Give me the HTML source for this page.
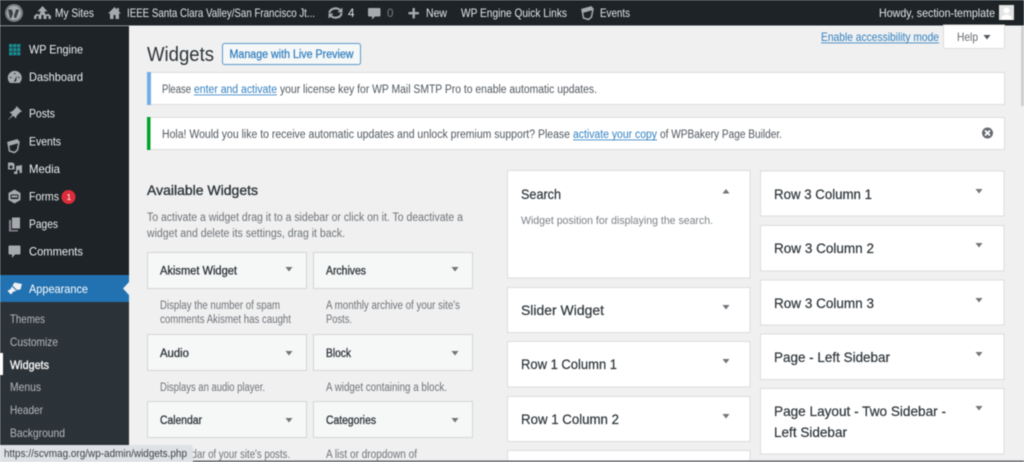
<!DOCTYPE html>
<html lang="en"><head><meta charset="utf-8"><title>Widgets</title>
<style>
html,body{margin:0;padding:0;width:1024px;height:462px;overflow:hidden;background:#f0f0f0}
svg{display:block;filter:blur(.4px)}
text{font-family:"Liberation Sans",sans-serif;font-size:12px;white-space:pre}
.b text{fill:#e6e8ea}
.s text{fill:#f0f0f1}
.u text{fill:#b4b9be}
.d text{fill:#6d7277;font-size:11.5px}
.w text{fill:#2c3338;font-size:11.5px;stroke:#2c3338;stroke-width:.3}
.t text{fill:#2c3338;font-size:14px;stroke:#2c3338;stroke-width:.2}
.n text{fill:#50575e;font-size:11.5px}
.lnk{fill:#2f7fc0}
.ic{fill:#a7aaad}
.av{fill:#f6f7f7;stroke:#d4d5d7}
.sb{fill:#fff;stroke:#dcdcde}
.ar{fill:#70757a}
</style></head><body>
<svg width="1024" height="462" viewBox="0 0 1024 462" xmlns="http://www.w3.org/2000/svg">
<rect width="1024" height="462" fill="#f0f0f0"/>
<rect x="1021" y="26" width="3" height="80" fill="#d0d0d0"/>
<!-- sidebar -->
<rect x="0" y="26" width="129" height="436" fill="#1d2327"/>
<rect x="0" y="275" width="129" height="27" fill="#2271b1"/>
<rect x="0" y="302" width="129" height="160" fill="#2c3338"/>
<path d="M129 282l-6 6.500 6 6.500z" fill="#f0f0f0"/>
<rect x="0" y="353" width="3" height="22" fill="#fff"/>
<!-- admin bar -->
<rect width="1024" height="25.500" fill="#1d2327"/>
<g class="b">
<text x="55" y="17" textLength="39" lengthAdjust="spacingAndGlyphs">My Sites</text>
<text x="127" y="17" textLength="188" lengthAdjust="spacingAndGlyphs">IEEE Santa Clara Valley/San Francisco Jt...</text>
<text x="348" y="17" textLength="6.500" lengthAdjust="spacingAndGlyphs">4</text>
<text x="387" y="17" textLength="6.500" lengthAdjust="spacingAndGlyphs" style="fill:#777c80">0</text>
<text x="426" y="17" textLength="21" lengthAdjust="spacingAndGlyphs">New</text>
<text x="461" y="17" textLength="106" lengthAdjust="spacingAndGlyphs">WP Engine Quick Links</text>
<text x="600" y="17" textLength="30" lengthAdjust="spacingAndGlyphs">Events</text>
<text x="879" y="17" textLength="116" lengthAdjust="spacingAndGlyphs">Howdy, section-template</text>
</g>
<!-- admin bar icons -->
<circle cx="14" cy="13" r="8.800" fill="#a7aaad"/>
<circle cx="14" cy="13" r="7.700" fill="none" stroke="#4a4f53" stroke-width=".7"/>
<path d="M8 9.500h3.800l2.200 6.500 2-6.500h-1.200h4.400l-3 8.500h-1.600l-1.600-4.600-1.600 4.600h-1.600z" fill="#3a3f43"/>
<path class="ic" d="M34 19v-3l3-2.500 2 1.500 3-6 .5-2 .5 2 3 6 2-1.500 3 2.500v3z"/>
<path class="ic" d="M42.500 6l-5 5.500h10z"/>
<rect x="36.500" y="16" width="2" height="3" fill="#1d2327"/><rect x="41.500" y="15" width="2" height="4" fill="#1d2327"/><rect x="46.500" y="16" width="2" height="3" fill="#1d2327"/>
<path class="ic" d="M114.500 7l-6.500 6.500h2v5.500h3.500v-4h2v4h3.500v-5.500h2l-2-2v-3.500h-2v1.500z"/>
<path fill="none" stroke="#a7aaad" stroke-width="2.200" d="M329.500 13a6 4.800 0 0 1 11-2.500M341.500 13a6 4.800 0 0 1-11 2.500"/>
<path class="ic" d="M342.500 7.500v5h-5zM328.500 18.500v-5h5z"/>
<path class="ic" d="M369 8h10.500a1 1 0 0 1 1 1v6.500a1 1 0 0 1-1 1H375l-3 3v-3h-3a1 1 0 0 1-1-1V9a1 1 0 0 1 1-1z"/>
<path class="ic" d="M412.500 8h2.400v4h4v2.400h-4v4h-2.400v-4h-4v-2.400h4z"/>
<path fill="none" stroke="#a7aaad" stroke-width="1.500" d="M582 9.500l9-2.500 2 2-1.500 8-3 2.500-5-1.500z"/><path class="ic" d="M582 9.500l10-3 1 3.500-10.500 3z"/>
<rect x="999" y="5" width="15" height="15" fill="#e4e4e4"/>
<circle cx="1006.500" cy="10.500" r="3" fill="#fff"/><path d="M1001 20c0-4 3-5.500 5.500-5.500s5.500 1.500 5.500 5.500z" fill="#fff"/>
<!-- sidebar text -->
<g class="s">
<text x="29" y="53.500" textLength="54" lengthAdjust="spacingAndGlyphs">WP Engine</text>
<text x="29" y="81" textLength="54" lengthAdjust="spacingAndGlyphs">Dashboard</text>
<text x="29" y="117.500" textLength="26" lengthAdjust="spacingAndGlyphs">Posts</text>
<text x="29" y="145.500" textLength="32" lengthAdjust="spacingAndGlyphs">Events</text>
<text x="29" y="173" textLength="31" lengthAdjust="spacingAndGlyphs">Media</text>
<text x="29" y="200.500" textLength="30" lengthAdjust="spacingAndGlyphs">Forms</text>
<text x="29" y="228" textLength="29" lengthAdjust="spacingAndGlyphs">Pages</text>
<text x="29" y="255.500" textLength="54" lengthAdjust="spacingAndGlyphs">Comments</text>
<text x="29" y="293" textLength="59" lengthAdjust="spacingAndGlyphs" style="fill:#fff">Appearance</text>
</g>
<circle cx="68.500" cy="197" r="7" fill="#dd2c3a"/>
<text x="66.500" y="200" style="font-size:8.500px;fill:#fff">1</text>
<g class="u">
<text x="10" y="323" textLength="35" lengthAdjust="spacingAndGlyphs">Themes</text>
<text x="10" y="346" textLength="48" lengthAdjust="spacingAndGlyphs">Customize</text>
<text x="10" y="369" textLength="39" lengthAdjust="spacingAndGlyphs" style="fill:#fff;stroke:#fff;stroke-width:.3">Widgets</text>
<text x="10" y="391" textLength="31" lengthAdjust="spacingAndGlyphs">Menus</text>
<text x="10" y="414" textLength="33" lengthAdjust="spacingAndGlyphs">Header</text>
<text x="10" y="437" textLength="55" lengthAdjust="spacingAndGlyphs">Background</text>
</g>
<!-- sidebar icons -->
<g fill="#1b8a8f">
<rect x="9" y="44" width="3.400" height="3.400"/><rect x="13" y="44" width="3.400" height="3.400"/><rect x="17" y="44" width="3.400" height="3.400"/>
<rect x="9" y="48" width="3.400" height="3.400"/><rect x="13" y="48" width="3.400" height="3.400"/><rect x="17" y="48" width="3.400" height="3.400"/>
<rect x="9" y="52" width="3.400" height="3.400"/><rect x="13" y="52" width="3.400" height="3.400"/><rect x="17" y="52" width="3.400" height="3.400"/>
</g>
<path class="ic" d="M10 83a7 7 0 1 1 9.500 0z"/>
<path d="M14 81.500l2.800-6-.8 6zM10 77h1.500v1H10zM18 77h1.500v1H18zM14 73h1.500v1H14z" fill="#1d2327"/>
<path class="ic" d="M16.500 106l5.500 5.500-2 .8-3.500 3.700-.5 2.500-2.800-2.800-5.700 4.800 4.800-5.700-2.800-2.800 2.500-.5 3.700-3.500z"/>
<g transform="translate(-574 133)"><path fill="none" stroke="#a7aaad" stroke-width="1.500" d="M582 9.500l9-2.500 2 2-1.500 8-3 2.500-5-1.500z"/><path class="ic" d="M582 9.500l10-3 1 3.500-10.500 3z"/></g>
<path class="ic" d="M8 162.500h5l1.500 1.500v5.500h-6.500zM16 166l6-1v8h-2.500v-3h-2v4h-3.500v-2.500h2z"/>
<circle cx="11" cy="167" r="1.500" fill="#1d2327"/>
<path class="ic" d="M14.500 189.500l6 3.500v7l-6 3.500-6-3.500v-7z"/>
<rect x="10.500" y="194.500" width="8" height="4.500" rx="1" fill="#1d2327"/><rect x="11.500" y="195.500" width="6" height="2" fill="#a7aaad"/>
<path class="ic" d="M12 217.500h8v11h-8z"/><path d="M9 220h2v10h7v1.500H9z" fill="#8b8794"/>
<path class="ic" d="M9.500 245.500h10a1 1 0 0 1 1 1v7a1 1 0 0 1-1 1h-4.500l-3 3.500v-3.500h-2.500a1 1 0 0 1-1-1v-7a1 1 0 0 1 1-1z"/>
<path d="M14.500 282.500l7.500 1.500-1.500 5.500-3.500.5-4.500-4.500z" fill="#f0f0f1"/>
<path d="M12 286.500l4.500 4.500-3 .5-2.500 3-3.500-3.500 3-2z" fill="#f0f0f1"/>
<!-- heading -->
<text x="147" y="61" textLength="67" lengthAdjust="spacingAndGlyphs" style="font-size:20px;fill:#2c3338">Widgets</text>
<rect x="222.500" y="43.500" width="138" height="21" rx="2" fill="#f6f7f7" stroke="#5a9bcf"/>
<text x="229.500" y="58" textLength="124" lengthAdjust="spacingAndGlyphs" class="lnk" style="font-size:11.500px;stroke:#2f7fc0;stroke-width:.25">Manage with Live Preview</text>
<text x="821" y="41" textLength="118" lengthAdjust="spacingAndGlyphs" class="lnk">Enable accessibility mode</text>
<rect x="821" y="42.500" width="118" height=".8" fill="#2f7fc0"/>
<path d="M943.500 25v21.500a2 2 0 0 0 2 2h57a2 2 0 0 0 2-2V25z" fill="#fff" stroke="#dcdcde"/>
<text x="957" y="41" textLength="21" lengthAdjust="spacingAndGlyphs" style="fill:#646970">Help</text>
<path d="M983.500 35h7l-3.500 4.500z" fill="#50575e"/>
<!-- notices -->
<rect x="147.500" y="72.500" width="857" height="32" fill="#fff" stroke="#dcdcde"/>
<rect x="147" y="72" width="4" height="33" fill="#72aee6"/>
<rect x="147.500" y="117.500" width="857" height="32" fill="#fff" stroke="#dcdcde"/>
<rect x="147" y="117" width="3.500" height="33" fill="#00a32a"/>
<g class="n">
<text x="162" y="93" textLength="29" lengthAdjust="spacingAndGlyphs">Please</text>
<text x="194" y="93" textLength="83" lengthAdjust="spacingAndGlyphs" style="fill:#2f7fc0">enter and activate</text>
<text x="280" y="93" textLength="317" lengthAdjust="spacingAndGlyphs">your license key for WP Mail SMTP Pro to enable automatic updates.</text>
<text x="162" y="138" textLength="408" lengthAdjust="spacingAndGlyphs">Hola! Would you like to receive automatic updates and unlock premium support? Please</text>
<text x="573" y="138" textLength="84" lengthAdjust="spacingAndGlyphs" style="fill:#2f7fc0">activate your copy</text>
<text x="660" y="138" textLength="122" lengthAdjust="spacingAndGlyphs">of WPBakery Page Builder.</text>
</g>
<rect x="194" y="94.500" width="83" height=".8" fill="#2f7fc0"/>
<rect x="573" y="139.500" width="84" height=".8" fill="#2f7fc0"/>
<circle cx="987.500" cy="133" r="5.500" fill="#646970"/>
<path d="M985 130.500l5 5m0-5l-5 5" stroke="#fff" stroke-width="1.800"/>
<!-- available widgets -->
<text x="147" y="195" textLength="111" lengthAdjust="spacingAndGlyphs" style="font-size:14px;fill:#2c3338;stroke:#2c3338;stroke-width:.35">Available Widgets</text>
<g class="d">
<text x="147" y="221" textLength="316" lengthAdjust="spacingAndGlyphs">To activate a widget drag it to a sidebar or click on it. To deactivate a</text>
<text x="147" y="237" textLength="198" lengthAdjust="spacingAndGlyphs">widget and delete its settings, drag it back.</text>
<text x="160" y="309" textLength="120" lengthAdjust="spacingAndGlyphs">Display the number of spam</text>
<text x="160" y="323" textLength="131" lengthAdjust="spacingAndGlyphs">comments Akismet has caught</text>
<text x="326" y="309" textLength="134" lengthAdjust="spacingAndGlyphs">A monthly archive of your site's</text>
<text x="326" y="323" textLength="26" lengthAdjust="spacingAndGlyphs">Posts.</text>
<text x="160" y="391" textLength="105" lengthAdjust="spacingAndGlyphs">Displays an audio player.</text>
<text x="326" y="391" textLength="121" lengthAdjust="spacingAndGlyphs">A widget containing a block.</text>
<text x="160" y="458" textLength="130" lengthAdjust="spacingAndGlyphs">A calendar of your site's posts.</text>
<text x="326" y="458" textLength="91" lengthAdjust="spacingAndGlyphs">A list or dropdown of</text>
</g>
<rect class="av" x="147.500" y="252.500" width="159" height="36"/>
<rect class="av" x="313.500" y="252.500" width="159" height="36"/>
<rect class="av" x="147.500" y="334.500" width="159" height="36"/>
<rect class="av" x="313.500" y="334.500" width="159" height="36"/>
<rect class="av" x="147.500" y="401.500" width="159" height="36"/>
<rect class="av" x="313.500" y="401.500" width="159" height="36"/>
<g class="w">
<text x="160" y="274.500" textLength="77" lengthAdjust="spacingAndGlyphs">Akismet Widget</text>
<text x="326" y="274.500" textLength="40" lengthAdjust="spacingAndGlyphs">Archives</text>
<text x="160" y="357" textLength="29" lengthAdjust="spacingAndGlyphs">Audio</text>
<text x="326" y="357" textLength="25" lengthAdjust="spacingAndGlyphs">Block</text>
<text x="160" y="424" textLength="42" lengthAdjust="spacingAndGlyphs">Calendar</text>
<text x="326" y="424" textLength="50" lengthAdjust="spacingAndGlyphs">Categories</text>
</g>
<g class="ar">
<path d="M285.500 267h7l-3.500 4.500z"/><path d="M451.500 267h7l-3.500 4.500z"/>
<path d="M285.500 351h7l-3.500 4.500z"/><path d="M451.500 351h7l-3.500 4.500z"/>
<path d="M285.500 418h7l-3.500 4.500z"/><path d="M451.500 418h7l-3.500 4.500z"/>
</g>
<!-- sidebars -->
<rect class="sb" x="507.500" y="170.500" width="242.500" height="107.500"/>
<rect class="sb" x="507.500" y="287.500" width="242.500" height="45"/>
<rect class="sb" x="507.500" y="341.500" width="242.500" height="45.500"/>
<rect class="sb" x="507.500" y="396.500" width="242.500" height="45"/>
<rect class="sb" x="507.500" y="450.500" width="242.500" height="30"/>
<rect class="sb" x="760.500" y="171" width="243.500" height="45"/>
<rect class="sb" x="760.500" y="225.500" width="243.500" height="45.500"/>
<rect class="sb" x="760.500" y="280" width="243.500" height="45"/>
<rect class="sb" x="760.500" y="334" width="243.500" height="45.500"/>
<rect class="sb" x="760.500" y="388.500" width="243.500" height="65.500"/>
<g class="t">
<text x="521" y="199" textLength="40" lengthAdjust="spacingAndGlyphs">Search</text>
<text x="521" y="315" textLength="83" lengthAdjust="spacingAndGlyphs">Slider Widget</text>
<text x="521" y="369" textLength="96" lengthAdjust="spacingAndGlyphs">Row 1 Column 1</text>
<text x="521" y="424" textLength="98" lengthAdjust="spacingAndGlyphs">Row 1 Column 2</text>
<text x="774" y="199" textLength="98" lengthAdjust="spacingAndGlyphs">Row 3 Column 1</text>
<text x="774" y="253" textLength="100" lengthAdjust="spacingAndGlyphs">Row 3 Column 2</text>
<text x="774" y="308" textLength="100" lengthAdjust="spacingAndGlyphs">Row 3 Column 3</text>
<text x="774" y="362" textLength="116" lengthAdjust="spacingAndGlyphs">Page - Left Sidebar</text>
<text x="774" y="416" textLength="172" lengthAdjust="spacingAndGlyphs">Page Layout - Two Sidebar -</text>
<text x="774" y="437" textLength="73" lengthAdjust="spacingAndGlyphs">Left Sidebar</text>
</g>
<text x="521" y="224" textLength="192" lengthAdjust="spacingAndGlyphs" style="font-size:11px;fill:#7b8086">Widget position for displaying the search.</text>
<g class="ar">
<path d="M722.500 193.500h7l-3.500-4.500z"/>
<path d="M722.500 305h7l-3.500 4.500z"/>
<path d="M722.500 359h7l-3.500 4.500z"/>
<path d="M722.500 414h7l-3.500 4.500z"/>
<path d="M975.500 189h7l-3.500 4.500z"/>
<path d="M975.500 243h7l-3.500 4.500z"/>
<path d="M975.500 298h7l-3.500 4.500z"/>
<path d="M975.500 352h7l-3.500 4.500z"/>
<path d="M975.500 406h7l-3.500 4.500z"/>
</g>
<!-- status bubble -->
<rect x="193" y="460.500" width="831" height="1.500" fill="#5f6368"/>
<path d="M0 445h190a3 3 0 0 1 3 3v14H0z" fill="#dee1e6"/>
<text x="4" y="457" textLength="183" lengthAdjust="spacingAndGlyphs" style="font-size:11px;fill:#3c4043">https://scvmag.org/wp-admin/widgets.php</text>
</svg>
</body></html>
